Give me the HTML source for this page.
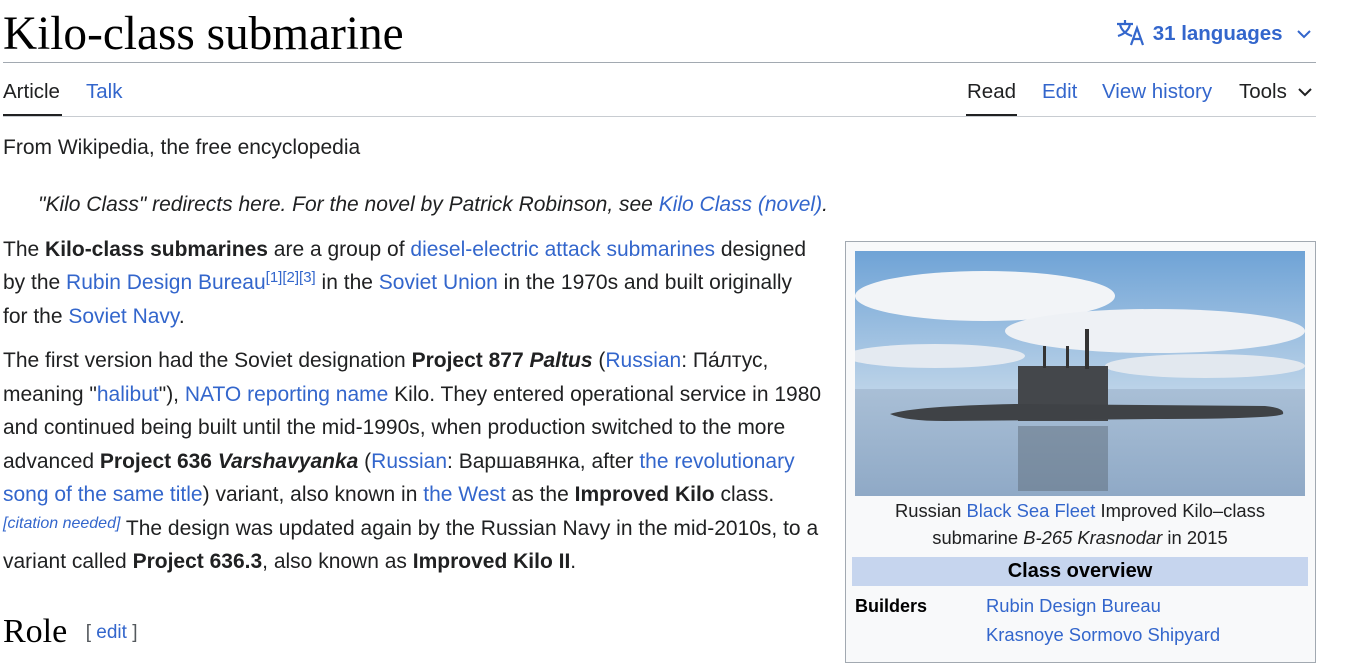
<!DOCTYPE html>
<html><head><meta charset="utf-8"><style>
body{margin:0;background:#fff;width:1365px;height:650px;overflow:hidden;position:relative;font-family:"Liberation Sans",sans-serif;color:#202122}
a{color:#3366cc;text-decoration:none}
.l{position:absolute;left:3px;white-space:nowrap;font-size:21px;line-height:33px;height:33px}
sup{font-size:15px;line-height:0;vertical-align:7px}
.abs{position:absolute;white-space:nowrap}
</style></head><body>
<div class="abs" style="left:3px;top:8px;font-family:'Liberation Serif',serif;font-size:47.3px;line-height:52px;color:#000">Kilo-class submarine</div>
<div class="abs" style="left:1115px;top:18px;font-size:20.5px;font-weight:bold;color:#3366cc;line-height:30px">
<svg width="32" height="28" viewBox="0 0 32 28" style="vertical-align:-6px"><g fill="none" stroke="#3366cc" stroke-width="2.2"><path d="M2 6h16M10 2v4M5 6c1 6 6 10 12 12M15 6c-1 6-6 10-12 12"/><path d="M16 27l6-17 6 17M18.5 21h7"/></g></svg> 31 languages
<svg width="16" height="12" viewBox="0 0 16 12" style="margin-left:8px;vertical-align:0"><path d="M2 3l6 6 6-6" fill="none" stroke="#3366cc" stroke-width="2"/></svg></div>
<div class="abs" style="left:3px;top:62px;width:1313px;height:1px;background:#a2a9b1"></div>
<div class="abs" style="left:3px;top:78px;font-size:20.5px;line-height:28px">Article</div>
<div class="abs" style="left:3px;top:114px;width:59px;height:3px;background:#202122"></div>
<div class="abs" style="left:86px;top:78px;font-size:20.5px;line-height:28px"><a>Talk</a></div>
<div class="abs" style="left:967px;top:78px;font-size:20.5px;line-height:28px">Read</div>
<div class="abs" style="left:966px;top:114px;width:51px;height:3px;background:#202122"></div>
<div class="abs" style="left:1042px;top:78px;font-size:20.5px;line-height:28px"><a>Edit</a></div>
<div class="abs" style="left:1102px;top:78px;font-size:20.5px;line-height:28px"><a>View history</a></div>
<div class="abs" style="left:1239px;top:78px;font-size:20.5px;line-height:28px">Tools <svg width="16" height="12" viewBox="0 0 16 12" style="margin-left:4px"><path d="M2 3l6 6 6-6" fill="none" stroke="#202122" stroke-width="2"/></svg></div>
<div class="abs" style="left:3px;top:116px;width:1313px;height:1px;background:#c8ccd1"></div>
<div class="abs" style="left:3px;top:135px;font-size:21px;line-height:26px">From Wikipedia, the free encyclopedia</div>
<div class="abs" style="left:38px;top:192px;font-size:21px;line-height:26px;font-style:italic">"Kilo Class" redirects here. For the novel by Patrick Robinson, see <a>Kilo Class (novel)</a>.</div>

<div class="l" style="top:233px">The <b>Kilo-class submarines</b> are a group of <a>diesel-electric attack submarines</a> designed</div>
<div class="l" style="top:266px">by the <a>Rubin Design Bureau</a><sup><a>[1][2][3]</a></sup> in the <a>Soviet Union</a> in the 1970s and built originally</div>
<div class="l" style="top:300px">for the <a>Soviet Navy</a>.</div>
<div class="l" style="top:344px">The first version had the Soviet designation <b>Project 877 <i>Paltus</i></b> (<a>Russian</a>: Па́лтус,</div>
<div class="l" style="top:378px">meaning "<a>halibut</a>"), <a>NATO reporting name</a> Kilo. They entered operational service in 1980</div>
<div class="l" style="top:411px">and continued being built until the mid-1990s, when production switched to the more</div>
<div class="l" style="top:445px">advanced <b>Project 636 <i>Varshavyanka</i></b> (<a>Russian</a>: Варшавянка, after <a>the revolutionary</a></div>
<div class="l" style="top:478px"><a>song of the same title</a>) variant, also known in <a>the West</a> as the <b>Improved Kilo</b> class.</div>
<div class="l" style="top:512px"><sup style="font-style:italic;font-size:16px"><a>[citation needed]</a></sup> The design was updated again by the Russian Navy in the mid-2010s, to a</div>
<div class="l" style="top:545px">variant called <b>Project 636.3</b>, also known as <b>Improved Kilo II</b>.</div>
<div class="abs" style="left:3px;top:612px;font-family:'Liberation Serif',serif;font-size:34px;line-height:40px;color:#000">Role <span style="font-family:'Liberation Sans',sans-serif;font-size:19px;color:#54595d;margin-left:10px;vertical-align:4px">[ <a>edit</a> ]</span></div>

<div class="abs" style="left:845px;top:241px;width:469px;height:420px;border:1px solid #a2a9b1;background:#f8f9fa"></div>
<svg class="abs" style="left:855px;top:251px" width="450" height="245" viewBox="0 0 450 245">
<defs><linearGradient id="s" x1="0" y1="0" x2="0" y2="1"><stop offset="0" stop-color="#6fa3d6"/><stop offset="1" stop-color="#bcd3e8"/></linearGradient>
<linearGradient id="w" x1="0" y1="0" x2="0" y2="1"><stop offset="0" stop-color="#a9bfd6"/><stop offset="1" stop-color="#8fa9c6"/></linearGradient></defs>
<rect width="450" height="140" fill="url(#s)"/>
<ellipse cx="130" cy="45" rx="130" ry="25" fill="#f2f4f7"/><ellipse cx="300" cy="80" rx="150" ry="22" fill="#eef1f5"/>
<ellipse cx="80" cy="105" rx="90" ry="12" fill="#e4eaf1"/><ellipse cx="350" cy="115" rx="100" ry="12" fill="#e2e8ef"/>
<rect y="138" width="450" height="107" fill="url(#w)"/>
<rect x="163" y="115" width="90" height="55" fill="#44474b"/>
<rect x="230" y="78" width="4" height="40" fill="#333"/><rect x="188" y="95" width="3" height="22" fill="#333"/><rect x="211" y="95" width="3" height="22" fill="#333"/>
<path d="M35 163 Q60 155 160 153 L410 155 Q430 157 428 163 Q420 168 300 168 L90 170 Q50 170 35 163Z" fill="#3f4246"/>
<rect x="163" y="175" width="90" height="65" fill="#5e6b7a" opacity=".5"/>
</svg>
<div class="abs" style="left:855px;top:497px;width:450px;text-align:center;font-size:18.4px;line-height:27px;white-space:normal">Russian <a>Black Sea Fleet</a> Improved Kilo–class<br>submarine <i>B-265 Krasnodar</i> in 2015</div>
<div class="abs" style="left:852px;top:557px;width:456px;height:29px;background:#c6d5ee;text-align:center;font-weight:bold;font-size:20px;line-height:29px;color:#000">Class overview</div>
<div class="abs" style="left:855px;top:593px;font-weight:bold;font-size:18px;line-height:26px;color:#000">Builders</div>
<div class="abs" style="left:986px;top:591px;font-size:18.4px;line-height:29px"><a>Rubin Design Bureau</a><br><a>Krasnoye Sormovo Shipyard</a></div>
</body></html>
